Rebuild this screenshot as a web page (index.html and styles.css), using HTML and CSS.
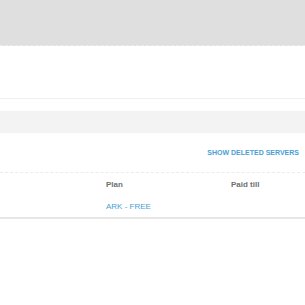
FILE: index.html
```html
<!DOCTYPE html>
<html lang="en">
<head>
    <meta charset="UTF-8">
    <meta name="viewport" content="width=device-width, initial-scale=1.0">
    <title>Servers</title>
    <link rel="stylesheet" href="styles.css">
</head>
<body>
    <div class="top-bar"></div>
    <div class="page-head"></div>
    <div class="filter-band"></div>
    <div class="server-actions">
        <a href="#" class="show-deleted">SHOW DELETED SERVERS</a>
    </div>
    <table class="server-table">
        <thead>
            <tr>
                <th class="col-name"></th>
                <th class="col-plan">Plan</th>
                <th class="col-paid">Paid till</th>
            </tr>
        </thead>
        <tbody>
            <tr>
                <td></td>
                <td><a href="#" class="plan-link">ARK - FREE</a></td>
                <td></td>
            </tr>
        </tbody>
    </table>
</body>
</html>
```

FILE: styles.css
```css
body {
    font-family: "Liberation Sans", Arial, sans-serif;
    margin: 0;
    padding: 0;
    background-color: #ffffff;
}

.top-bar {
    height: 45px;
    background-color: #dfdfdf;
    border-bottom: 1px dashed #ececec;
}

.page-head {
    height: 52px;
    border-bottom: 1px solid #efefef;
}

.filter-band {
    margin-top: 12px;
    height: 22px;
    background-color: #f3f3f3;
}

.server-actions {
    display: flex;
    justify-content: flex-end;
    align-items: center;
    height: 39px;
    padding-right: 6px;
    border-bottom: 1px dashed #ececec;
}

.show-deleted {
    font-size: 7px;
    font-weight: bold;
    color: #4a9fd4;
    text-decoration: none;
}

.server-table {
    width: 100%;
    border-collapse: collapse;
    border-bottom: 2px solid #e6e6e6;
    font-size: 8px;
}

.server-table th,
.server-table td {
    padding: 0;
    height: 22px;
    text-align: left;
}

.server-table th {
    color: #707070;
    font-weight: bold;
}

.col-name {
    width: 106px;
}

.col-plan {
    width: 125px;
}

.plan-link {
    color: #4a9fd4;
    text-decoration: none;
}
```
